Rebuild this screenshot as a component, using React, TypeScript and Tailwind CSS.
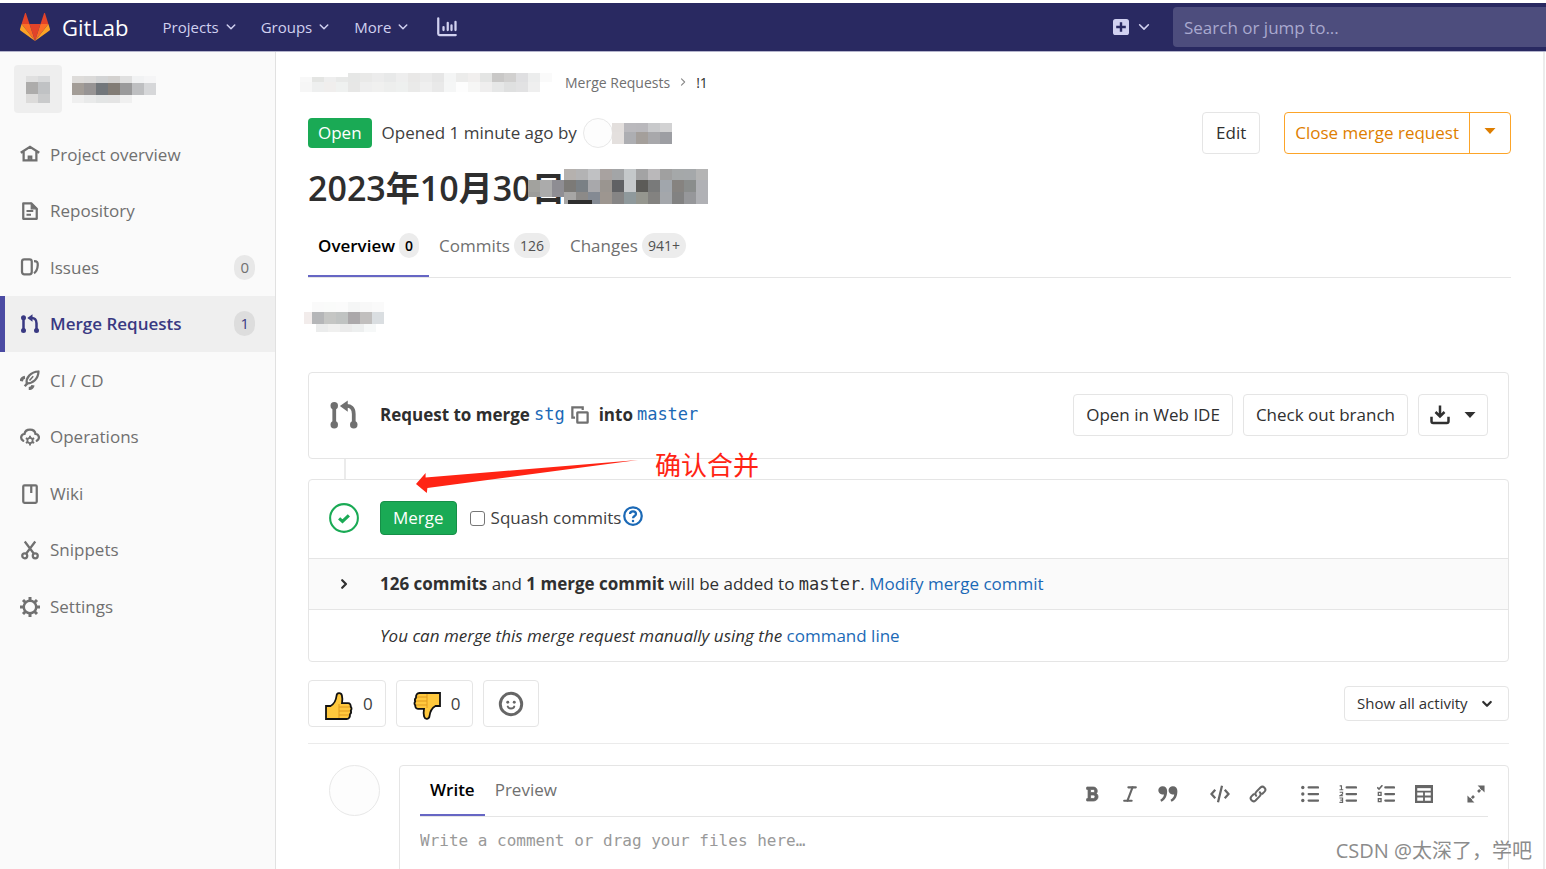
import type { ReactNode } from "react";
import { Italic } from "lucide-react";
import { FaBold } from "react-icons/fa";

type IconName =
  | "home" | "doc" | "issues" | "merge" | "rocket" | "cloud" | "book" | "scissors" | "gear"
  | "chevronDown" | "chevronRight" | "chart" | "plus" | "copy" | "download" | "smile" | "check"
  | "question" | "quote" | "code" | "link" | "ul" | "ol" | "tasks" | "table" | "expand";

const ICONS: Record<IconName, ReactNode> = {
  home: <path d="M.6 7 8 2.2 15.4 7M2.9 6.2V13h10.2V6.2M7 13.6V10h2v3.6" />,
  doc: (
    <>
      <path d="M2.6 1.800h6.400l4.400 4.400v8H2.600z" strokeLinejoin="round" />
      <path d="M9 2v4.200h4.400z" fill="currentColor" strokeWidth="1" />
      <path d="M5.200 8h5.400M5.200 11h3.600" strokeWidth="1.500" />
    </>
  ),
  issues: (
    <>
      <rect x="1.600" y="1.800" width="7.800" height="12" rx="1.800" />
      <path d="M11.200 3.200c2.400 0 3.200 1 3 3.400-.2 3-1 5-3 6.400" />
    </>
  ),
  merge: (
    <>
      <path d="M2.800 3v10M9 3.200c2.600-.2 4.200 1.200 4.200 4.200V13" strokeWidth="2" />
      <g fill="currentColor" stroke="none">
        <circle cx="2.800" cy="3" r="2" />
        <circle cx="2.800" cy="13.200" r="2" />
        <circle cx="13.200" cy="13.200" r="2" />
        <path d="M5.800 3.200 10 .2v6z" />
      </g>
    </>
  ),
  rocket: (
    <>
      <path d="M5.400 10.600c-.8-4 3-9.200 9.400-9.400-.2 5.800-4.400 9.600-9.400 9.400z" strokeLinejoin="round" />
      <path d="M7.600 8.400 10.600 5" strokeWidth="1.200" />
      <path d="M4 5.800C2.200 6 1.200 7.200 1 9M7 14.800c1.800 0 3-.8 3.400-2.600" strokeWidth="2.600" />
      <path d="M3.800 13 5.800 10.800" strokeWidth="2" />
    </>
  ),
  cloud: (
    <>
      <path d="M2.600 11C-.2 9.400.8 5.800 3.600 5.600 4.200.8 11.800.8 12.400 5.600c3 .2 3.800 3.800 1 5.400" strokeLinecap="round" />
      <circle cx="8" cy="10.800" r="2.100" strokeWidth="1.400" />
      <path
        d="M8 7v1.600M8 13v1.800M4.700 8.900l1.500.9M9.800 11.900l1.500.9M11.300 8.900l-1.500.9M6.200 11.900l-1.500.9"
        strokeWidth="1.500"
      />
    </>
  ),
  book: (
    <>
      <rect x="2.600" y="1" width="10.800" height="14" rx="1" />
      <path d="M9 1.400v5.800" />
    </>
  ),
  scissors: (
    <>
      <circle cx="3.800" cy="12.600" r="2" />
      <circle cx="12.200" cy="12.600" r="2" />
      <path d="M3.800 1.200 11 10.800M12.200 1.200 5 10.800" />
    </>
  ),
  gear: (
    <>
      <circle cx="8" cy="8" r="5" strokeWidth="2" />
      <path
        d="M8 0v3M8 13v3M0 8h3M13 8h3M2.400 2.400l2 2M11.600 11.600l2 2M13.600 2.400l-2 2M4.400 11.600l-2 2"
        strokeWidth="2.400"
      />
    </>
  ),
  chevronDown: <path d="m3 5.400 5 5 5-5" strokeLinecap="round" strokeLinejoin="round" />,
  chevronRight: <path d="m5.600 3 5 5-5 5" strokeLinecap="round" strokeLinejoin="round" />,
  chart: (
    <path
      d="M1 1v12.400c0 .8.200 1 1 1H15M5.200 8v2.400M8.600 4.600v5.800M11.600 6.600v3.800M14.800 3.800v6.600"
      strokeLinecap="round"
    />
  ),
  plus: (
    <>
      <rect x="0" y="0" width="16" height="16" rx="2.600" fill="currentColor" stroke="none" />
      <path d="M8 3.200v9.600M3.200 8h9.600" stroke="#292961" strokeWidth="2.400" />
    </>
  ),
  copy: (
    <>
      <path d="M3.600 10.400H1.200V1.200h9.200v2.400" strokeWidth="2" />
      <rect x="5.600" y="5.600" width="9.200" height="9.200" rx=".4" strokeWidth="2" />
    </>
  ),
  download: (
    <path
      d="M8 .4v8M4.400 5.600 8 9.200l3.600-3.600M1.200 9.400V13c0 1 .4 1.400 1.400 1.400h10.800c1 0 1.400-.4 1.400-1.400V9.400"
      strokeWidth="2"
    />
  ),
  smile: (
    <>
      <circle cx="8" cy="8" r="6.600" />
      <path d="M6 9.600c.4 1.600 3.600 1.600 4 0" strokeWidth="1.200" strokeLinecap="round" />
      <circle cx="6" cy="6.900" r=".9" fill="currentColor" stroke="none" />
      <circle cx="10" cy="6.900" r=".9" fill="currentColor" stroke="none" />
    </>
  ),
  check: (
    <>
      <circle cx="8" cy="8" r="7.400" strokeWidth="1.100" />
      <path d="m5.400 8.200 1.800 1.600 3.400-3.200" strokeWidth="1.700" />
    </>
  ),
  question: (
    <>
      <circle cx="8" cy="8" r="7" />
      <path d="M5.600 6.400c.2-3 4.800-2.600 4.800 0C10.400 8 8 8 8 9.800" />
      <circle cx="8" cy="12" r="1" fill="currentColor" stroke="none" />
    </>
  ),
  quote: (
    <path
      d="M3.800 1.800a3.300 3.300 0 0 0-.5 6.600c.6.1 1 .1 1.500-.1-.3 1.900-1.300 3.200-3 4.200l.8 1.700C6 12.600 7.300 9.600 7.300 5.600 7.300 3.200 5.800 1.800 3.800 1.800zM12 1.800a3.300 3.300 0 0 0-.5 6.600c.6.1 1 .1 1.500-.1-.3 1.900-1.300 3.200-3 4.200l.8 1.700c3.400-1.600 4.700-4.600 4.700-8.600 0-2.400-1.500-3.800-3.500-3.800z"
      fill="currentColor"
      stroke="none"
    />
  ),
  code: <path d="m4.200 4.600-3 3.400 3 3.400M11.800 4.600l3 3.400-3 3.400M9.600 1.400 6.400 14.600" />,
  link: (
    <path
      d="M6.400 9.600c-1-1.200-.8-2.700.2-3.700l3.600-3.600c2.400-2.200 5.800 1.200 3.600 3.600l-1.900 1.900M9.600 6.400c1 1.200.8 2.700-.2 3.700l-3.600 3.600c-2.400 2.200-5.800-1.200-3.600-3.600l1.900-1.900"
      strokeLinecap="round"
    />
  ),
  ul: (
    <>
      <path d="M6.800 2.200h8.400M6.800 8h8.400M6.800 13.800h8.400" strokeWidth="2" strokeLinecap="round" />
      <g fill="currentColor" stroke="none">
        <circle cx="1.600" cy="2.200" r="1.500" />
        <circle cx="1.600" cy="8" r="1.500" />
        <circle cx="1.600" cy="13.800" r="1.500" />
      </g>
    </>
  ),
  ol: (
    <>
      <path d="M6.800 2.200h8.400M6.800 8h8.400M6.800 13.800h8.400" strokeWidth="2" strokeLinecap="round" />
      <path
        d="M.6.800h1.600v3.400M.4 4.200h3.400M.6 6.400h2.600V8L.8 9.600h2.800M.4 11.600h2.800v3.800H.4M1.200 13.400h2"
        strokeWidth="1"
      />
    </>
  ),
  tasks: (
    <>
      <path d="M7.400 2.200h7.800M7.400 8h7.800M7.400 13.800h7.800" strokeWidth="2" strokeLinecap="round" />
      <path d="m.2 2 1.600 1.600L4.800.2" strokeWidth="1.400" />
      <path d="M1.200 6.600h2.400v2.600H1.200zM1.200 12.200h2.400v2.600H1.200z" strokeWidth="1.200" />
    </>
  ),
  table: (
    <>
      <rect x="1" y="1" width="14" height="14" strokeWidth="2" />
      <path d="M1 5.800h14M1 10.200h14M8 5.800V15" strokeWidth="1.600" />
      <path d="M1 1.400h14" strokeWidth="2.800" />
    </>
  ),
  expand: (
    <>
      <path d="m9.800 6.200 3.600-3.600M6.200 9.800l-3.600 3.600" strokeWidth="2.400" strokeDasharray="2.600 .8" />
      <path d="M9.400.4h6.200v6.200zM.4 9.400v6.200h6.200z" fill="currentColor" stroke="none" />
    </>
  ),
};

function Icon({ name, className }: { name: IconName; className: string }) {
  return (
    <svg
      viewBox="0 0 16 16"
      fill="none"
      stroke="currentColor"
      strokeWidth="1.8"
      className={"shrink-0 " + className}
      aria-hidden="true"
    >
      {ICONS[name]}
    </svg>
  );
}

type MosaicRow = { x: number; y: number; h: number; colors: string[] };

// Redaction blocks, 12px wide cells.
function Mosaic({ rows, className }: { rows: MosaicRow[]; className: string }) {
  return (
    <svg className={"shrink-0 " + className} shapeRendering="crispEdges" aria-hidden="true">
      {rows.map((r) =>
        r.colors.map((c, i) => (
          <rect
            key={`${r.x}-${r.y}-${i}`}
            x={r.x + i * 12}
            y={r.y}
            width="12"
            height={r.h}
            fill={c}
          />
        )),
      )}
    </svg>
  );
}

const AVATAR_MOSAIC: MosaicRow[] = [
  { x: 0, y: 0, h: 6, colors: ["#e0e0e0", "#d9dadb"] },
  { x: 0, y: 6, h: 12, colors: ["#adacab", "#c0c2c4"] },
  { x: 0, y: 18, h: 9, colors: ["#dcdbda", "#c9cacb"] },
];

const PROJECT_MOSAIC: MosaicRow[] = [
  { x: 0, y: 0, h: 7, colors: ["#dedcda", "#dbdad9", "#d3d4d5", "#d3d1cf", "#e0e0e0", "#f1f2f3", "#f5f5f6"] },
  { x: 0, y: 7, h: 12, colors: ["#a39d97", "#979494", "#72777b", "#827c75", "#9a9a9b", "#bebfc1", "#d6d7d9"] },
  { x: 0, y: 19, h: 8, colors: ["#efefef", "#e9eaea", "#e3e5e5", "#e4e4e4", "#f0f0f0"] },
];

const CRUMB_MOSAIC: MosaicRow[] = [
  { x: 0, y: 5, h: 5, colors: ["#f8f8f8", "#e4e5e3", "#eeeeee", "#e8e9e8"] },
  {
    x: 48,
    y: 1,
    h: 9,
    colors: [
      "#e6e7e6", "#e9e9e8", "#ececec", "#e8e9e9", "#eeeeee", "#e9e8e7", "#ebebeb", "#e6e6e6",
      "#f4f5f5", "#ececeb", "#f1efee", "#e4e5e4", "#c9c8c7", "#d1d0cf", "#dfdfe1", "#eceded", "#fafafa",
    ],
  },
  {
    x: 0,
    y: 10,
    h: 10,
    colors: [
      "#f6f6f6", "#eeefef", "#f0eeed", "#eff1f0", "#e7e7e6", "#eeeeee", "#f0f0ef", "#edeeed",
      "#eef0ef", "#eaeae9", "#efefef", "#e9e9e9", "#f5f6f6", "#fdfdfd", "#f6f6f5", "#efeeee",
      "#e6e7e7", "#dfe0e0", "#e2e2e3", "#efefef",
    ],
  },
];

const AUTHOR_MOSAIC: MosaicRow[] = [
  { x: 0, y: 0, h: 9, colors: ["#e3dfdd", "#bab9bd", "#b9b8bc", "#c8c9cb", "#d2d2d3"] },
  { x: 0, y: 9, h: 12, colors: ["#e4e0de", "#adaeb2", "#a49f9b", "#a8a8ab", "#9d9ea3"] },
];

const TITLE_MOSAIC: MosaicRow[] = [
  {
    x: 36,
    y: 0,
    h: 11,
    colors: [
      "#b5b1ae", "#b3b3b4", "#c0c1c3", "#a8a2a0", "#a3a5a7", "#c4c8ca", "#a3a3a4", "#bab8ba",
      "#a0a0a0", "#a5a8a9", "#a5a8aa", "#b4b4b4",
    ],
  },
  {
    x: 0,
    y: 11,
    h: 12,
    colors: [
      "#a2a29e", "#ababab", "#8e8d93", "#7c7a77", "#7a8085", "#a8a8ab", "#9a9590", "#606164",
      "#c6c9cb", "#5c5b58", "#797a7a", "#a1a6ac", "#868380", "#8a8d8c", "#b0b1b5",
    ],
  },
  { x: 0, y: 23, h: 5, colors: ["#9d9d9a", "#ababab", "#8f8e94"] },
  {
    x: 36,
    y: 23,
    h: 12,
    colors: [
      "#a7a6a5", "#8c8a88", "#848a93", "#9d9690", "#868585", "#8f999c", "#95968f", "#838280",
      "#a4a7ab", "#828282", "#96979a", "#b0b1b5",
    ],
  },
  { x: 40, y: 31, h: 4, colors: ["#2e2e2e", "#2e2e2e"] },
];

const DESC_MOSAIC: MosaicRow[] = [
  { x: 8, y: 0, h: 10, colors: ["#fafafa", "#fafbfa", "#fbfbfb", "#f5f6f6", "#f8f8f8", "#fafafa"] },
  { x: 0, y: 10, h: 12, colors: ["#f2eceb"] },
  { x: 8, y: 10, h: 12, colors: ["#b5b6b8", "#c5c6c4", "#c0c3c2", "#aba8aa", "#c1bfbe", "#dadee1"] },
  { x: 12, y: 22, h: 8, colors: ["#ebecec", "#f0f0ef", "#ebebeb", "#edefef", "#f6f8f8"] },
];

const NAV: { icon: IconName; label: string; count?: number; active?: boolean }[] = [
  { icon: "home", label: "Project overview" },
  { icon: "doc", label: "Repository" },
  { icon: "issues", label: "Issues", count: 0 },
  { icon: "merge", label: "Merge Requests", count: 1, active: true },
  { icon: "rocket", label: "CI / CD" },
  { icon: "cloud", label: "Operations" },
  { icon: "book", label: "Wiki" },
  { icon: "scissors", label: "Snippets" },
  { icon: "gear", label: "Settings" },
];

const TABS = [
  { label: "Overview", count: "0", active: true },
  { label: "Commits", count: "126", active: false },
  { label: "Changes", count: "941+", active: false },
];

function Tanuki() {
  return (
    <svg viewBox="0 0 30 28" className="h-7 w-[30px] shrink-0" aria-hidden="true">
      <path d="M15 28 9.5 11h11z" fill="#e24329" />
      <path d="M15 28 9.5 11H1.6z" fill="#fc6d26" />
      <path d="M1.6 11 0 16.2c-.1.5 0 1 .4 1.200L15 28z" fill="#fca326" />
      <path d="M1.6 11h7.900L6 .5c-.2-.6-.9-.6-1.100 0z" fill="#e24329" />
      <path d="m15 28 5.500-17h7.900z" fill="#fc6d26" />
      <path d="m28.400 11 1.600 5.200c.1.500 0 1-.4 1.200L15 28z" fill="#fca326" />
      <path d="M28.400 11h-7.900L24 .5c.2-.6.900-.6 1.100 0z" fill="#e24329" />
    </svg>
  );
}

function Thumb({ className }: { className?: string }) {
  return (
    <svg viewBox="0 0 28 28" className={"mt-1 size-7 " + (className ?? "")} aria-hidden="true">
      <path
        d="M1 14h4.500c3.500-2 5.500-5.500 6-10 .2-3.400 4.500-3.800 5.400-.6.700 2.600.6 5 .1 7.800h6c2 0 3 1.600 2.600 3.300 1.200 1.200 1.200 3 .2 4 .6 1.600.2 3-.8 3.800.2 2.900-1.200 4.700-3.400 4.700H1z"
        fill="#ffc83d"
        stroke="#111"
        strokeWidth="1.8"
      />
      <path d="M14 12v14M14 15h11M14 19h11M14 23h10" stroke="#e09a1e" strokeWidth="1" fill="none" />
    </svg>
  );
}

function Caret({ className }: { className?: string }) {
  return (
    <svg viewBox="0 0 12 6" className={"h-1.5 w-3 shrink-0 " + (className ?? "")} aria-hidden="true">
      <path d="M.5 0h11L6 6z" fill="currentColor" />
    </svg>
  );
}

function TopMenu({ label }: { label: string }) {
  return (
    <button type="button" className="flex items-center gap-1.5 text-[15px] font-medium">
      {label}
      <Icon name="chevronDown" className="size-3 stroke-2" />
    </button>
  );
}

function TopBar() {
  return (
    <header className="mt-[3px] flex h-[49px] shrink-0 items-center border-b border-[#b4b4cc] bg-[#292961] pl-5 text-[#d1d1f0]">
      <a href="#" className="flex items-center gap-3 text-[22px] leading-none text-white">
        <Tanuki />
        GitLab
      </a>
      <nav className="ml-[34px] flex items-center gap-6">
        <TopMenu label="Projects" />
        <TopMenu label="Groups" />
        <TopMenu label="More" />
        <button type="button" aria-label="Analytics" className="ml-1">
          <Icon name="chart" className="size-5" />
        </button>
      </nav>
      <button type="button" aria-label="New" className="ml-auto flex items-center gap-2">
        <Icon name="plus" className="size-4" />
        <Icon name="chevronDown" className="size-3.5" />
      </button>
      <input
        type="search"
        aria-label="Search"
        placeholder="Search or jump to..."
        className="ml-[22px] h-10 w-[373px] rounded-l bg-[#4d4d7d] px-[11px] text-[17px] text-white placeholder:text-[#a9a9cf]"
      />
    </header>
  );
}

function Sidebar() {
  return (
    <aside className="w-[276px] shrink-0 border-r border-[#e1e1e1] bg-[#fafafa]">
      <div className="flex h-[74px] items-center gap-2.5 pl-3.5">
        <div className="flex size-12 items-center justify-center rounded bg-[#eeeeee]">
          <Mosaic className="h-[27px] w-6" rows={AVATAR_MOSAIC} />
        </div>
        <Mosaic className="h-[27px] w-[84px]" rows={PROJECT_MOSAIC} />
      </div>
      <nav className="grid h-[509px] grid-rows-9">
        {NAV.map((item) => (
          <a
            key={item.label}
            href="#"
            className={
              "flex items-center gap-2.5 pr-5 text-[17px] " +
              (item.active
                ? "border-l-[5px] border-[#4b4ba3] bg-[#efefef] pl-[15px] font-semibold text-[#393982]"
                : "pl-5 text-[#707070]")
            }
          >
            <Icon name={item.icon} className="size-5" />
            {item.label}
            {item.count !== undefined && (
              <span
                className={
                  "ml-auto rounded-full px-1.5 text-[15px] leading-[25px] font-normal " +
                  (item.active ? "bg-[#dddddd]" : "bg-[#e8e8e8]")
                }
              >
                {item.count}
              </span>
            )}
          </a>
        ))}
      </nav>
    </aside>
  );
}

function RequestHeader() {
  return (
    <>
      <div className="flex h-[60px] items-center text-[14px]">
        <Mosaic className="-ml-2 h-5 w-[252px]" rows={CRUMB_MOSAIC} />
        <a href="#" className="ml-[13px] text-[#707070]">
          Merge Requests
        </a>
        <Icon name="chevronRight" className="mx-2 size-2.5 text-[#888888]" />
        <span className="text-[#303030]">!1</span>
      </div>
      <div className="flex h-[42px] items-center">
        <span className="rounded bg-[#1aaa55] px-2.5 text-[17px] leading-[30px] text-white">Open</span>
        <span className="ml-2.5 text-[17px] text-[#404040]">Opened 1 minute ago by</span>
        <span className="ml-1.5 size-[30px] rounded-full border border-[#e8e8e8] bg-[#fdfdfd]" />
        <Mosaic className="-ml-px h-[21px] w-[60px]" rows={AUTHOR_MOSAIC} />
        <button
          type="button"
          className="ml-auto h-[42px] rounded border border-[#e5e5e5] px-[13px] text-[17px] text-[#303030]"
        >
          Edit
        </button>
        <div className="ml-6 flex h-[42px] rounded border border-[#fca429] text-[#de7e00]">
          <button type="button" className="px-2.5 text-[17px]">
            Close merge request
          </button>
          <button type="button" aria-label="More options" className="border-l border-[#fca429] px-3.5">
            <Caret className="mb-1" />
          </button>
        </div>
      </div>
      <h1 className="relative mt-2.5 h-12 text-[34px] leading-[48px] font-semibold text-[#2e2e2e]">
        2023年10月30日
        <Mosaic className="absolute top-[5px] left-[220px] h-[35px] w-[180px]" rows={TITLE_MOSAIC} />
      </h1>
      <div className="flex h-[66px] border-b border-[#e5e5e5] text-[17px]" role="tablist">
        {TABS.map((t) => (
          <button
            key={t.label}
            type="button"
            role="tab"
            aria-selected={t.active}
            className={
              "flex items-center gap-1 border-b-2 px-2.5 pt-1 " +
              (t.active
                ? "border-[#6666c4] font-semibold text-black"
                : "border-transparent text-[#707070]")
            }
          >
            {t.label}
            <span
              className={
                "rounded-full bg-[#ececec] px-1.5 text-[14px] leading-[25px] " +
                (t.active ? "text-black" : "text-[#505050]")
              }
            >
              {t.count}
            </span>
          </button>
        ))}
      </div>
    </>
  );
}

function BoxButton({ children }: { children: ReactNode }) {
  return (
    <button type="button" className="h-[42px] rounded border border-[#e5e5e5] px-3 text-[17px] text-[#303030]">
      {children}
    </button>
  );
}

function MergeWidget() {
  return (
    <section className="relative">
      <div className="flex h-[87px] items-center rounded border border-[#e5e5e5] px-5 pb-0.5">
        <Icon name="merge" className="size-[30px] text-[#707070]" />
        <p className="ml-[21px] flex items-center text-[17px] font-bold text-[#2e2e2e]">
          Request to merge
          <a href="#" className="ml-1 font-mono font-normal text-[#1b69b6]">
            stg
          </a>
          <button type="button" aria-label="Copy branch name" className="mx-1.5 text-[#707070]">
            <Icon name="copy" className="size-[18px]" />
          </button>
          <span className="ml-1">into</span>
          <a href="#" className="ml-1 font-mono font-normal text-[#1b69b6]">
            master
          </a>
        </p>
        <div className="ml-auto flex gap-2.5">
          <BoxButton>Open in Web IDE</BoxButton>
          <BoxButton>Check out branch</BoxButton>
          <button
            type="button"
            aria-label="Download"
            className="flex h-[42px] items-center gap-3.5 rounded border border-[#e5e5e5] px-[11px] text-[#303030]"
          >
            <Icon name="download" className="size-5" />
            <Caret />
          </button>
        </div>
      </div>
      <div className="ml-9 h-5 w-0.5 bg-[#ebebeb]" />
      <div className="rounded border border-[#e5e5e5]">
        <div className="flex h-[78px] items-center px-5 pb-0.5">
          <Icon name="check" className="size-[30px] text-[#1aaa55]" />
          <button
            type="button"
            className="ml-[21px] h-[34px] rounded border border-[#168f48] bg-[#1aaa55] px-3 text-[17px] text-white"
          >
            Merge
          </button>
          <label className="ml-[13px] flex items-center gap-1.5 text-[17px] text-[#404040]">
            <input
              type="checkbox"
              className="size-[15px] appearance-none rounded-[3px] border border-[#767676] bg-white"
            />
            Squash commits
          </label>
          <a href="#" aria-label="Help" className="ml-0.5 pb-1 text-[#1b69b6]">
            <Icon name="question" className="size-5" />
          </a>
        </div>
        <div className="flex h-[52px] items-center border-y border-[#e5e5e5] bg-[#fafafa] px-5 text-[17px] text-[#303030]">
          <button type="button" aria-label="Expand commits" className="flex w-[30px] justify-center">
            <Icon name="chevronRight" className="size-3 stroke-3" />
          </button>
          <p className="ml-[21px]">
            <strong>126 commits</strong> and <strong>1 merge commit</strong> will be added to{" "}
            <span className="font-mono">master</span>.{" "}
            <a href="#" className="text-[#1b69b6]">
              Modify merge commit
            </a>
          </p>
        </div>
        <p className="pl-[71px] text-[17px] leading-[51px] text-[#303030]">
          <em>You can merge this merge request manually using the</em>{" "}
          <a href="#" className="text-[#1b69b6]">
            command line
          </a>
        </p>
      </div>

      {/* red annotation over the widget */}
      <svg
        viewBox="0 0 222 34"
        className="absolute top-[87px] left-[108px] h-[34px] w-[222px]"
        aria-hidden="true"
      >
        <path d="M0 25 9.600 14v4.600L222 1 11.400 29l-.6 5z" fill="#ff2414" />
      </svg>
      <span className="absolute top-[73px] left-[347px] text-[26px] leading-10 text-[#ff2414]">确认合并</span>
    </section>
  );
}

function Awards() {
  const box = "flex h-[47px] items-center rounded border border-[#e5e5e5] text-[17px] text-[#404040] ";
  return (
    <div className="mt-[18px] flex items-center gap-2.5 border-b border-[#ebebeb] pb-4">
      <button type="button" aria-label="Thumbs up" className={box + "gap-2.5 pr-3 pl-4"}>
        <Thumb />
        <span>0</span>
      </button>
      <button type="button" aria-label="Thumbs down" className={box + "gap-2.5 pr-3 pl-4"}>
        <Thumb className="rotate-180" />
        <span>0</span>
      </button>
      <button type="button" aria-label="Add reaction" className={box + "px-3.5 text-[#666666]"}>
        <Icon name="smile" className="size-[26px]" />
      </button>
      <div className="relative ml-auto">
        <select
          aria-label="Activity filter"
          className="block h-[35px] appearance-none rounded border border-[#e5e5e5] bg-white pr-10 pl-3 text-[15px] text-[#303030]"
        >
          <option>Show all activity</option>
        </select>
        <Icon
          name="chevronDown"
          className="pointer-events-none absolute top-3 right-4 size-3 stroke-3 text-[#303030]"
        />
      </div>
    </div>
  );
}

function Tool({ label, spaced, children }: { label: string; spaced?: boolean; children: ReactNode }) {
  return (
    <button type="button" aria-label={label} className={"flex w-5 justify-center " + (spaced ? "ml-3.5" : "")}>
      {children}
    </button>
  );
}

function Toolbar() {
  return (
    <div className="ml-auto flex items-center gap-[18px] pt-1.5 pr-0.5 text-[#666666]">
      <Tool label="Bold">
        <FaBold className="size-4 stroke-current stroke-[24]" />
      </Tool>
      <Tool label="Italic">
        <Italic className="size-[22px]" strokeWidth={2.5} />
      </Tool>
      <Tool label="Quote">
        <Icon name="quote" className="size-5" />
      </Tool>
      <Tool label="Code" spaced>
        <Icon name="code" className="size-5" />
      </Tool>
      <Tool label="Link">
        <Icon name="link" className="size-[18px]" />
      </Tool>
      <Tool label="Bullet list" spaced>
        <Icon name="ul" className="size-[18px]" />
      </Tool>
      <Tool label="Numbered list">
        <Icon name="ol" className="size-[18px]" />
      </Tool>
      <Tool label="Task list">
        <Icon name="tasks" className="size-[18px]" />
      </Tool>
      <Tool label="Table">
        <Icon name="table" className="size-[18px]" />
      </Tool>
      <Tool label="Full screen" spaced>
        <Icon name="expand" className="size-[18px]" />
      </Tool>
    </div>
  );
}

function CommentForm() {
  return (
    <div className="mt-[21px] flex pl-[21px]">
      <span className="size-[51px] shrink-0 rounded-full border border-[#e8e8e8] bg-[#fdfdfd]" />
      <div className="ml-[19px] min-w-0 flex-1 rounded border border-[#e5e5e5] px-5">
        <div className="flex h-[51px] border-b border-[#e5e5e5] text-[17px]">
          <button type="button" className="border-b-2 border-[#6666c4] px-2.5 font-semibold text-black">
            Write
          </button>
          <button type="button" className="border-b-2 border-transparent px-2.5 text-[#707070]">
            Preview
          </button>
          <Toolbar />
        </div>
        <textarea
          aria-label="Comment"
          placeholder="Write a comment or drag your files here…"
          className="mt-3 block h-40 w-full resize-none font-mono text-[16px] leading-6 placeholder:text-[#999999]"
        />
      </div>
    </div>
  );
}

export default function App() {
  return (
    <div className="relative flex h-screen flex-col overflow-hidden bg-white font-['Open_Sans','Noto_Sans_CJK_SC',sans-serif] [--font-mono:'DejaVu_Sans_Mono',monospace]">
      <TopBar />
      <div className="flex min-h-0 flex-1">
        <Sidebar />
        <main className="mr-px min-w-0 flex-1 border-r-2 border-[#ececec] px-8">
          <RequestHeader />
          <div className="pr-0.5">
            <div className="h-[94px] pt-6">
              <Mosaic className="-ml-1 h-[30px] w-20" rows={DESC_MOSAIC} />
            </div>
            <MergeWidget />
            <Awards />
            <CommentForm />
          </div>
        </main>
      </div>
      <span className="pointer-events-none absolute right-3.5 bottom-0 text-[20px] leading-9 text-[#8c8c8c]">
        CSDN @太深了，学吧
      </span>
    </div>
  );
}
